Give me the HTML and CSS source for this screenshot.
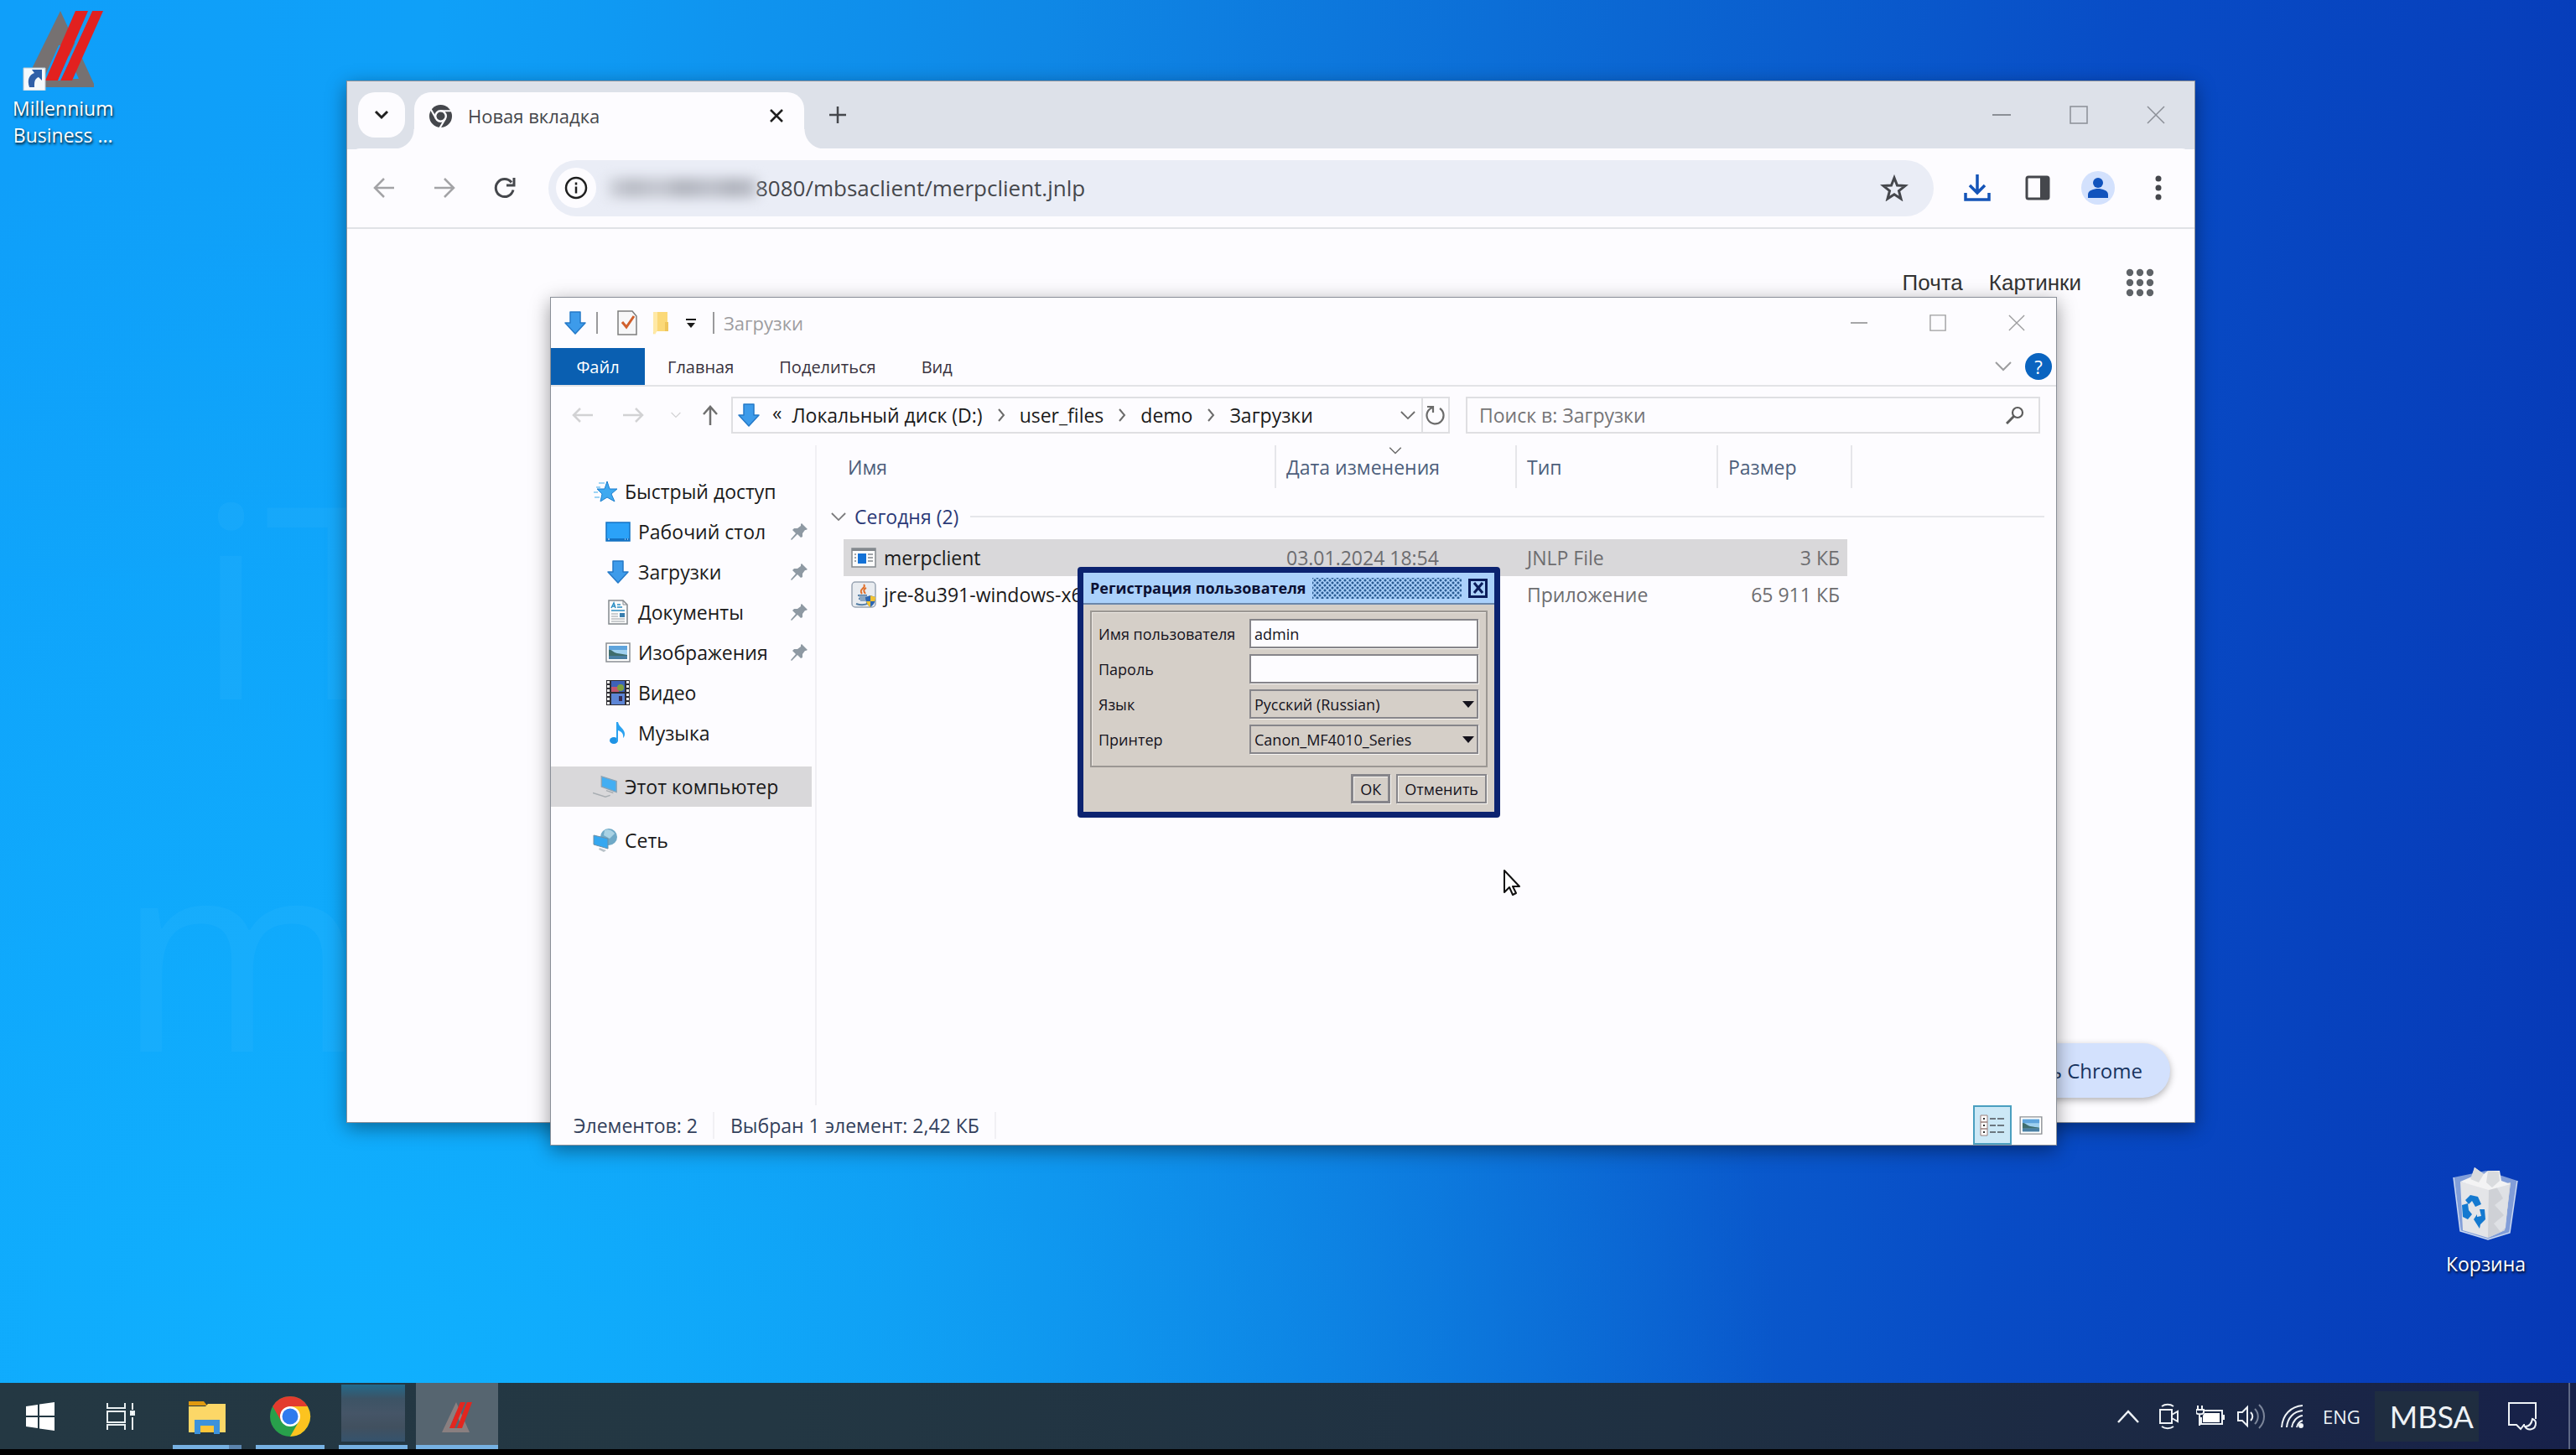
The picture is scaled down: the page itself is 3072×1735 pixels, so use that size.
FILE: index.html
```html
<!DOCTYPE html>
<html lang="ru">
<head>
  <meta charset="UTF-8" />
  <meta name="viewport" content="width=device-width, initial-scale=1.0"/>
  <title>Регистрация пользователя</title>
  <link rel="stylesheet" href="styles.css">
</head>
<body>

  <!-- Shared icons -->
  <svg class="sprite" aria-hidden="true">
    <symbol id="i-down" viewBox="0 0 26 28">
      <path d="M7 1h12v13h6L13 27 1 14h6z" fill="#3d9bea" stroke="#2579c8" stroke-width="1.5" stroke-linejoin="round"/>
    </symbol>
    <symbol id="i-pin" viewBox="0 0 22 22">
      <path d="M14 1l7 7-2 1-1 0-3 4 0 4-2 1-4-4-7 7-1-1 6-7-4-4 2-2 4 0 4-3 0-2z" fill="#8e99a3"/>
    </symbol>
    <symbol id="i-chev" viewBox="0 0 20 12">
      <path d="M1 1l9 9 9-9" fill="none" stroke="currentColor" stroke-width="2"/>
    </symbol>
    <symbol id="i-sep" viewBox="0 0 10 16">
      <path d="M2 1l6 7-6 7" fill="none" stroke="#6b6b6b" stroke-width="2"/>
    </symbol>
    <symbol id="i-min" viewBox="0 0 22 22"><path d="M0 11h22" stroke="currentColor" stroke-width="2"/></symbol>
    <symbol id="i-max" viewBox="0 0 22 22"><path d="M1 1h20v20H1z" fill="none" stroke="currentColor" stroke-width="1.5"/></symbol>
    <symbol id="i-close" viewBox="0 0 22 22"><path d="M1 1l20 20M21 1L1 21" stroke="currentColor" stroke-width="1.5"/></symbol>
    <symbol id="i-photo" viewBox="0 0 30 24">
      <path d="M1 1h28v22H1z" fill="#fff" stroke="#8b8f94" stroke-width="1.5"/>
      <path d="M4 4h22v16H4z" fill="#9fd0ef"/>
      <path d="M4 4h22v5H4z" fill="#5fa4dc"/>
      <path d="M4 9c3-1 5 3 10 4s8 1 12 2v1H4z" fill="#3f6d6d"/>
      <path d="M4 16h22v4H4z" fill="#4a7fa3"/>
    </symbol>
  </svg>

  <main class="desktop">
    <div class="wallpaper-mark mark-it" aria-hidden="true">iT</div>
    <div class="wallpaper-mark mark-m" aria-hidden="true">m</div>

    <!-- Desktop shortcuts -->
    <a class="shortcut shortcut-mbs" href="#">
      <svg width="98" height="98" viewBox="0 0 98 98">
        <path fill-rule="evenodd" d="M46 3L86 90v4H10L9 78zM44 44L26 84h42L50 44z" fill="#767171"/>
        <path d="M64 3h15L43 86H28z" fill="#e2211f"/>
        <path d="M84 3h13L60 86H46z" fill="#e2211f"/>
        <path d="M81 3h3L46 86h-3z" fill="#1b9bf0"/>
        <path d="M2 71h26v27H2z" fill="#f5f9fc" stroke="#b9c7d2"/>
        <path d="M9 94c-3-9 0-15 6-17l-3-4h12v13l-4-4c-5 2-5 6-5 12z" fill="#2f5fa8"/>
      </svg>
      <span>Millennium<br>Business ...</span>
    </a>
    <a class="shortcut shortcut-bin" href="#">
      <svg width="78" height="88" viewBox="0 0 78 88">
        <path d="M1 13L40 5l37 12-9 62-26 8-33-10z" fill="#c3d3ea" opacity=".65"/>
        <path d="M9 18l34 8 26-7-7 57-20 9-30-9z" fill="#e4e5e8"/>
        <path d="M43 26l26-7-7 57-20 9z" fill="#cfd1d6"/>
        <path d="M52 24l8 14-10 8 11 12-12 10 8 10 6-5 5-53z" fill="#dfe1e5"/>
        <path d="M9 18l14-6 3-11 11 8 5-4 14 0 2 12 11 4-26 7z" fill="#f3f3f4"/>
        <path d="M26 1l11 8-6 10-10-4zM42 5l-2 14 7 6 9-8-1-11z" fill="#d9dbde"/>
        <path d="M1 13l8 64 33 10 26-8 9-62" fill="none" stroke="#eaf1fb" stroke-width="1.5" opacity=".8"/>
        <path d="M15 40l6-6 9 2 4 9-7 3-4-7-4 4zM11 46l7-2 1 8 4 5-5 6-6-3zM25 63l4-6 0 3 5-1-2-8 6 0 1 12-6 6-1 5z" fill="#1479d0"/>
      </svg>
      <span>Корзина</span>
    </a>

    <!-- Browser window -->
    <section class="window browser" aria-label="Chrome">
      <header class="tabstrip">
        <button class="tab-search" aria-label="Поиск вкладок">
          <svg width="18" height="12" viewBox="0 0 18 12"><path d="M2 2l7 7 7-7" fill="none" stroke="#1f1f1f" stroke-width="3"/></svg>
        </button>
        <div class="tab">
          <svg width="29" height="29" viewBox="0 0 30 30">
            <circle cx="15" cy="15" r="14" fill="#45474c"/>
            <circle cx="15" cy="15" r="6.5" fill="none" stroke="#fdfcff" stroke-width="2.5"/>
            <path d="M15 8.500h14M9.400 18.200L2.500 6M20.600 18.200L14 29.500" stroke="#fdfcff" stroke-width="2.200"/>
          </svg>
          <span class="tab-title">Новая вкладка</span>
          <button class="tab-close" aria-label="Закрыть вкладку">
            <svg width="16" height="16" viewBox="0 0 16 16"><path d="M1 1l14 14M15 1L1 15" stroke="#1f1f1f" stroke-width="2.500"/></svg>
          </button>
        </div>
        <button class="tab-new" aria-label="Новая вкладка">
          <svg width="22" height="22" viewBox="0 0 22 22"><path d="M11 1v20M1 11h20" stroke="#45474c" stroke-width="2.500"/></svg>
        </button>
        <div class="win-controls">
          <button aria-label="Свернуть"><svg width="22" height="22"><use href="#i-min"/></svg></button>
          <button aria-label="Развернуть"><svg width="22" height="22"><use href="#i-max"/></svg></button>
          <button aria-label="Закрыть"><svg width="22" height="22"><use href="#i-close"/></svg></button>
        </div>
      </header>

      <div class="toolbar">
        <button aria-label="Назад"><svg width="26" height="26" viewBox="0 0 26 26"><path d="M25 13H2M13 2L2 13l11 11" fill="none" stroke="#a3a3a6" stroke-width="2.500"/></svg></button>
        <button aria-label="Вперед"><svg width="26" height="26" viewBox="0 0 26 26"><path d="M1 13h23M13 2l11 11-11 11" fill="none" stroke="#a3a3a6" stroke-width="2.500"/></svg></button>
        <button aria-label="Обновить"><svg width="28" height="28" viewBox="0 0 28 28"><path d="M24 16.500A10.500 10.500 0 1 1 22 7.500M25 2v9h-9" fill="none" stroke="#45474c" stroke-width="3"/></svg></button>
        <div class="omnibox">
          <button class="site-info" aria-label="Сведения о сайте">
            <svg width="28" height="28" viewBox="0 0 28 28"><circle cx="14" cy="14" r="12" fill="none" stroke="#1f1f1f" stroke-width="2.500"/><path d="M14 12.500v8M14 7.500v3" stroke="#1f1f1f" stroke-width="2.500"/></svg>
          </button>
          <span class="url-hidden"></span>
          <input class="url" type="text" aria-label="Адрес" value="8080/mbsaclient/merpclient.jnlp">
          <button class="star" aria-label="Добавить в закладки">
            <svg width="34" height="32" viewBox="0 0 34 32"><path d="M17 4l3.500 9 9.500.600-7.500 6 2.500 9.400-8-5.300L9 29l2.500-9.400L4 13.600l9.500-.600z" fill="none" stroke="#45474c" stroke-width="3"/></svg>
          </button>
        </div>
        <button aria-label="Загрузки"><svg width="32" height="34" viewBox="0 0 32 34"><path d="M16 1v21M7 14l9 9 9-9M2 23v8h28v-8" fill="none" stroke="#1454b8" stroke-width="3.500"/></svg></button>
        <button aria-label="Боковая панель"><svg width="30" height="30" viewBox="0 0 30 30"><rect x="2" y="2" width="26" height="26" rx="2" fill="none" stroke="#45474c" stroke-width="3"/><path d="M18 2h10v26H18z" fill="#45474c"/></svg></button>
        <button aria-label="Профиль"><svg width="40" height="40" viewBox="0 0 40 40"><circle cx="20" cy="20" r="20" fill="#d3e1fd"/><circle cx="20" cy="14" r="6" fill="#1153bd"/><path d="M8 32v-4c0-5 7-7 12-7s12 2 12 7v4z" fill="#1153bd"/></svg></button>
        <button aria-label="Меню"><svg width="8" height="30" viewBox="0 0 8 30"><circle cx="4" cy="4" r="3.500" fill="#45474c"/><circle cx="4" cy="15" r="3.500" fill="#45474c"/><circle cx="4" cy="26" r="3.500" fill="#45474c"/></svg></button>
      </div>

      <div class="page">
        <nav class="page-links">
          <a href="#">Почта</a>
          <a href="#">Картинки</a>
          <button aria-label="Приложения">
            <svg width="34" height="34" viewBox="0 0 34 34" fill="#5f6368">
              <circle cx="5" cy="5" r="4.200"/><circle cx="17" cy="5" r="4.200"/><circle cx="29" cy="5" r="4.200"/>
              <circle cx="5" cy="17" r="4.200"/><circle cx="17" cy="17" r="4.200"/><circle cx="29" cy="17" r="4.200"/>
              <circle cx="5" cy="29" r="4.200"/><circle cx="17" cy="29" r="4.200"/><circle cx="29" cy="29" r="4.200"/>
            </svg>
          </button>
        </nav>
        <button class="customize">Настроить Chrome</button>
      </div>
    </section>

    <!-- File explorer window -->
    <section class="window explorer" aria-label="Загрузки">
      <header class="titlebar">
        <svg width="26" height="28"><use href="#i-down"/></svg>
        <i class="bar"></i>
        <svg class="qa-doc" width="24" height="30" viewBox="0 0 24 30"><path d="M1 1h17l5 6v22H1z" fill="#f7f7f8" stroke="#7d7d7d" stroke-width="1.500"/><path d="M6 14l5 6 9-13" fill="none" stroke="#d1602c" stroke-width="3"/></svg>
        <svg class="qa-folder" width="20" height="30" viewBox="0 0 20 30"><path d="M1 2h17v23H3l-2 4z" fill="#fbd978"/><path d="M1 2h5v22l-3 5-2-3z" fill="#ffe9a6"/><path d="M15 14h4v11h-4z" fill="#efc65c"/></svg>
        <svg class="qa-more" width="12" height="12" viewBox="0 0 12 12"><path d="M0 1h12v2H0zM1 6h10l-5 6z" fill="#1a1a1a"/></svg>
        <i class="bar"></i>
        <span class="title">Загрузки</span>
        <div class="win-controls">
          <button aria-label="Свернуть"><svg width="20" height="20"><use href="#i-min"/></svg></button>
          <button aria-label="Развернуть"><svg width="20" height="20"><use href="#i-max"/></svg></button>
          <button aria-label="Закрыть"><svg width="20" height="20"><use href="#i-close"/></svg></button>
        </div>
      </header>

      <div class="ribbon">
        <button class="file-tab">Файл</button>
        <button>Главная</button>
        <button>Поделиться</button>
        <button>Вид</button>
        <svg class="ribbon-chev" width="20" height="12"><use href="#i-chev"/></svg>
        <button class="help" aria-label="Справка">?</button>
      </div>

      <div class="address-row">
        <div class="nav-arrows">
          <svg width="26" height="18" viewBox="0 0 26 18"><path d="M25 9H2M10 1L2 9l8 8" fill="none" stroke="#d2d2d4" stroke-width="2.500"/></svg>
          <svg width="26" height="18" viewBox="0 0 26 18"><path d="M1 9h23M16 1l8 8-8 8" fill="none" stroke="#d2d2d4" stroke-width="2.500"/></svg>
          <svg class="faint" width="12" height="8"><use href="#i-chev"/></svg>
          <svg width="18" height="24" viewBox="0 0 18 24"><path d="M9 24V2M1 11l8-9 8 9" fill="none" stroke="#6f6f6f" stroke-width="2.500"/></svg>
        </div>
        <div class="crumbs">
          <svg width="26" height="28"><use href="#i-down"/></svg>
          <span class="more">«</span>
          <a href="#">Локальный диск (D:)</a>
          <svg width="10" height="16"><use href="#i-sep"/></svg>
          <a href="#">user_files</a>
          <svg width="10" height="16"><use href="#i-sep"/></svg>
          <a href="#">demo</a>
          <svg width="10" height="16"><use href="#i-sep"/></svg>
          <a href="#">Загрузки</a>
          <svg class="crumb-chev" width="18" height="11"><use href="#i-chev"/></svg>
          <button class="refresh" aria-label="Обновить">
            <svg width="24" height="24" viewBox="0 0 24 24"><path d="M17 4a10 10 0 1 1-9-1M2 2h7v7" fill="none" stroke="#6b6b6b" stroke-width="2.200"/></svg>
          </button>
        </div>
        <div class="search">
          <input type="text" aria-label="Поиск" placeholder="Поиск в: Загрузки">
          <svg width="22" height="22" viewBox="0 0 22 22"><circle cx="14" cy="8" r="6" fill="none" stroke="#5c5c5c" stroke-width="2.200"/><path d="M10 12l-9 9" stroke="#5c5c5c" stroke-width="3"/></svg>
        </div>
      </div>

      <div class="explorer-body">
        <nav class="tree">
          <a href="#" class="root">
            <svg width="28" height="26" viewBox="0 0 28 26"><path d="M16 1l3 9 9 0-7 6 4 9-9-5-8 5 2-9-6-6 9 0z" fill="#3fa9f0" stroke="#1e7fce"/><path d="M6 3h7M3 8h5M0 14h5M1 20h6" stroke="#7fc6f2" stroke-width="1.500"/></svg>
            Быстрый доступ
          </a>
          <a href="#">
            <svg width="30" height="24" viewBox="0 0 30 24"><path d="M1 1h28v22H1z" fill="#2ba2f8" stroke="#1573c4" stroke-width="1.500"/><path d="M1 20h28v3H1z" fill="#1573c4"/><path d="M3 21h2M23 21h1M26 21h1" stroke="#fff"/></svg>
            Рабочий стол <svg class="pin" width="22" height="22"><use href="#i-pin"/></svg>
          </a>
          <a href="#">
            <svg width="30" height="28"><use href="#i-down"/></svg>
            Загрузки <svg class="pin" width="22" height="22"><use href="#i-pin"/></svg>
          </a>
          <a href="#">
            <svg width="30" height="30" viewBox="0 0 30 30"><path d="M4 1h17l5 5v23H4z" fill="#fbfbfb" stroke="#84898e" stroke-width="1.500"/><path d="M21 1v5h5" fill="none" stroke="#84898e"/><path d="M7 10l3-6 2 6M8 8h4M14 6h4M14 9h6M7 13h16" stroke="#2d8fc4" fill="none" stroke-width="1.500"/><path d="M17 16h6v5h-6z" fill="#3b7fae"/><path d="M7 17h8M7 20h8M7 23h16M7 26h16" stroke="#9aa0a5"/></svg>
            Документы <svg class="pin" width="22" height="22"><use href="#i-pin"/></svg>
          </a>
          <a href="#">
            <svg width="30" height="24"><use href="#i-photo"/></svg>
            Изображения <svg class="pin" width="22" height="22"><use href="#i-pin"/></svg>
          </a>
          <a href="#">
            <svg width="30" height="32" viewBox="0 0 30 32"><path d="M1 1h28v30H1z" fill="#2e2d33"/><path d="M7 2h16v13H7z" fill="#3d62b8"/><path d="M7 17h16v13H7z" fill="#5d86d6"/><path d="M7 9h9v6H7z" fill="#c2566f"/><circle cx="18" cy="10" r="4" fill="#7da03c"/><path d="M16 20h4v6h-4z" fill="#3a2d52"/><path d="M3.500 2v28M26.500 2v28" stroke="#f2f2f2" stroke-width="3" stroke-dasharray="3 2"/></svg>
            Видео
          </a>
          <a href="#">
            <svg width="30" height="30" viewBox="0 0 30 30"><ellipse cx="10" cy="24" rx="5" ry="4" fill="#1f93e4"/><path d="M13 25V2h2c1 6 8 8 8 14 0 3-1 4-2 5 1-5-2-8-6-9v13z" fill="#2ba2f0"/></svg>
            Музыка
          </a>
          <a href="#" class="root group selected">
            <svg width="32" height="28" viewBox="0 0 32 28"><path d="M11 1l19 6v14L11 14z" fill="#43aef2" stroke="#8aa3b5" stroke-width="1.500"/><path d="M17 19l9 3M0 22l16 5 6-2" fill="none" stroke="#a8adb2" stroke-width="1.500"/></svg>
            Этот компьютер
          </a>
          <a href="#" class="root group">
            <svg width="30" height="30" viewBox="0 0 30 30"><circle cx="19" cy="11" r="10" fill="#6fa9c7"/><path d="M14 3c5-2 10 1 12 4l-6 6-7-4z" fill="#a9d2e4"/><path d="M1 9l17 4v12L1 20z" fill="#35a7f0" stroke="#6f8fa5"/><path d="M8 24l8 3-3 2-6-3z" fill="#b9c2c9"/></svg>
            Сеть
          </a>
        </nav>

        <div class="files">
          <svg class="sort-chev" width="16" height="9"><use href="#i-chev"/></svg>
          <table>
            <colgroup><col class="c-name"><col class="c-date"><col class="c-type"><col class="c-size"><col></colgroup>
            <thead>
              <tr><th>Имя</th><th>Дата изменения</th><th>Тип</th><th>Размер</th><td></td></tr>
            </thead>
            <tbody>
              <tr class="group-row">
                <td colspan="5"><div><svg width="18" height="11"><use href="#i-chev"/></svg>Сегодня (2)<i></i></div></td>
              </tr>
              <tr class="picked">
                <td><span class="file">
                  <svg width="30" height="24" viewBox="0 0 30 24"><path d="M1 1h28v22H1z" fill="#fbfbfb" stroke="#84898e" stroke-width="1.500"/><path d="M1 1h28v3H1z" fill="#84898e"/><path d="M8 7h10v12H8z" fill="#1371d6"/><path d="M20 8h6M20 12h6M20 16h6M4 8h2M4 12h2M4 16h2" stroke="#84898e" stroke-width="1.500"/></svg>
                  merpclient</span></td>
                <td>03.01.2024 18:54</td><td>JNLP File</td><td class="size">3 КБ</td><td></td>
              </tr>
              <tr>
                <td><span class="file">
                  <svg width="30" height="32" viewBox="0 0 30 32"><rect x="1" y="1" width="28" height="30" rx="4" fill="#e9ecf0" stroke="#9aa5b3" stroke-width="1.500"/><path d="M15 4c4 4-7 5-2 11M18 8c-4 2-3 4-1 7" fill="none" stroke="#e0702b" stroke-width="2"/><path d="M8 17h11M9 21h9M6 27c6 2 12 1 15-1" fill="none" stroke="#527da5" stroke-width="2"/><path d="M9 17h10l-2 7h-6z" fill="#8aa6c2"/><path d="M17 19l6-2 6 2c0 6-2 9-6 12-4-3-6-6-6-12z" fill="#2d66b2"/><path d="M23 17l6 2c0 2 0 3-1 5h-5zM18 24h5v7c-3-2-4-4-5-7z" fill="#f1c232"/></svg>
                  jre-8u391-windows-x64</span></td>
                <td></td><td>Приложение</td><td class="size">65 911 КБ</td><td></td>
              </tr>
            </tbody>
          </table>
        </div>
      </div>

      <footer class="status">
        <span>Элементов: 2</span>
        <span>Выбран 1 элемент: 2,42 КБ</span>
        <button class="view active" aria-label="Таблица">
          <svg width="30" height="26" viewBox="0 0 30 26"><path d="M1 1h8v8H1zM1 9h8v8H1zM1 17h8v8H1z" fill="#fff" stroke="#9a7f7a"/><path d="M4 4h2v2H4zM4 12h2v2H4zM4 20h2v2H4z" fill="#333"/><path d="M12 5h7M21 5h8M12 13h7M21 13h8M12 21h7M21 21h8" stroke="#6d7880" stroke-width="2"/></svg>
        </button>
        <button class="view" aria-label="Крупные значки"><svg width="28" height="22"><use href="#i-photo"/></svg></button>
      </footer>
    </section>

    <!-- Login dialog -->
    <form class="dialog">
      <header class="dialog-title">
        <h1>Регистрация пользователя</h1>
        <i class="grip"></i>
        <button type="button" aria-label="Закрыть"><svg width="12" height="14" viewBox="0 0 12 14"><path d="M1 1l10 12M11 1L1 13" stroke="#0b1d5c" stroke-width="3"/></svg></button>
      </header>
      <div class="fields">
        <label for="user">Имя пользователя</label>
        <input id="user" type="text" value="admin">
        <label for="pass">Пароль</label>
        <input id="pass" type="password">
        <label for="lang">Язык</label>
        <span class="combo"><select id="lang"><option>Русский (Russian)</option></select></span>
        <label for="printer">Принтер</label>
        <span class="combo"><select id="printer"><option>Canon_MF4010_Series</option></select></span>
      </div>
      <div class="actions">
        <button type="button" class="default">ОК</button>
        <button type="button">Отменить</button>
      </div>
    </form>

    <svg class="cursor" width="22" height="33" viewBox="0 0 22 33"><path d="M2 2v26l6-6 4 9 4-2-4-8h8z" fill="#fff" stroke="#111" stroke-width="2" stroke-linejoin="round"/></svg>
  </main>

  <!-- Taskbar -->
  <footer class="taskbar">
    <button aria-label="Пуск">
      <svg width="34" height="34" viewBox="0 0 34 34"><path d="M0 5l14-2v13H0zM16 2.500L34 0v16H16zM0 18h14v13L0 29zM16 18h18v16l-18-2.500z" fill="#fff"/></svg>
    </button>
    <button aria-label="Представление задач">
      <svg width="34" height="32" viewBox="0 0 34 32" fill="none" stroke="#e8eef0" stroke-width="2"><path d="M1 0v6h21V0M1 10h21v13H1zM1 32v-6h21v6M31 0v8M31 17v15"/><path d="M29 10h4v4h-4z" fill="#fff"/></svg>
    </button>
    <button class="open stacked" aria-label="Проводник">
      <svg width="44" height="44" viewBox="0 0 44 44"><path d="M0 4h18l4 5H0z" fill="#e0990f"/><path d="M0 10h20l3-3h21v34H0z" fill="#fcd767"/><path d="M7 26h30v17h-7V33H14v10H7z" fill="#3d92dc"/><path d="M14 33h16v8H14z" fill="#fcc53a"/></svg>
    </button>
    <button class="open" aria-label="Chrome">
      <svg width="50" height="50" viewBox="0 0 50 50"><circle cx="25" cy="25" r="24" fill="#28a04b"/><path d="M4.200 13A24 24 0 0 1 45.800 13H25L14.600 31z" fill="#e33b2e"/><path d="M45.800 13A24 24 0 0 1 25 49l10.400-18L25 13z" fill="#fcc31f"/><circle cx="25" cy="25" r="12" fill="#fff"/><circle cx="25" cy="25" r="9.500" fill="#2f7bee"/></svg>
    </button>
    <button class="open" aria-label="Приложение"><i class="smudge"></i></button>
    <button class="open current" aria-label="Millennium Business Suite">
      <svg width="36" height="42" viewBox="0 0 36 42"><path fill-rule="evenodd" d="M17 4l16 36H0zM17 16L9 35h15z" fill="#8a7f80"/><path d="M22 4h6L15 35H9zM30 4h6L24 35h-6z" fill="#e3261f"/></svg>
    </button>

    <div class="tray">
      <svg height="16" viewBox="0 0 26 16"><path d="M1 15L13 2l12 13" fill="none" stroke="#eef2f6" stroke-width="2.500"/></svg>
      <svg height="32" viewBox="0 0 24 32" fill="none" stroke="#eef2f6" stroke-width="2"><path d="M1 8h14v16H1zM15 14l7-4v12l-7-4M3 4c4-3 10-3 14 0M3 28c4 3 10 3 14 0"/></svg>
      <svg height="26" viewBox="0 0 34 26"><path d="M8 6h23v16H6v-8" fill="none" stroke="#eef2f6" stroke-width="2"/><path d="M10 9h18v11H8v-8zM32 11h2v6h-2z" fill="#fff"/><path d="M2 0v5M7 0v5M0 5h9v3c0 3-9 3-9 0zM4 10v14" stroke="#eef2f6" stroke-width="2" fill="none"/></svg>
      <svg height="32" viewBox="0 0 34 32" fill="none" stroke="#eef2f6" stroke-width="2"><path d="M1 11h5l6-6v22l-6-6H1zM16 11c3 3 3 7 0 10"/><path d="M21 7c5 5 5 13 0 18M26 2c8 8 8 20 0 28" stroke="#7c869a"/></svg>
      <svg height="28" viewBox="0 0 28 28" fill="none" stroke="#eef2f6" stroke-width="2"><path d="M1 27C2 12 12 2 26 1M7 27C8 16 15 8 26 7M13 27c1-7 6-13 13-14M19 27c1-4 3-7 7-8"/><circle cx="24" cy="25" r="2" fill="#fff"/></svg>
      <span class="lang">ENG</span>
      <span class="clock">MBSA</span>
      <svg height="34" viewBox="0 0 34 34" fill="none" stroke="#eef2f6" stroke-width="2"><path d="M20 27h-1l-4 5-5-5H1V1h32v19"/><path d="M29 20c-1 6-4 9-9 9 3 5 13 5 13-4 0-2-1-4-4-5z"/></svg>
    </div>
  </footer>

</body>
</html>
```

FILE: styles.css
```css
* { margin: 0; padding: 0; box-sizing: border-box; }
html, body {
  height: 100%;
  overflow: hidden;
}
body {
  display: flex;
  flex-direction: column;
  font-family: 'Open Sans', 'Noto Sans', sans-serif;
  font-size: 23px;
  color: #1a1a1a;
  background: #000;
}
button, input, select {
  font: inherit;
  color: inherit;
  background: none;
  border: 0;
  border-radius: 0;
  outline: 0;
}
a { color: inherit; text-decoration: none; }
svg { display: block; flex: none; }
.sprite { position: absolute; width: 0; height: 0; }

/* Desktop */
.desktop {
  flex: 1;
  position: relative;
  overflow: hidden;
  background:
    radial-gradient(ellipse 55% 90% at 14% 100%, #10b0fe 0%, rgba(16,176,254,0) 100%),
    linear-gradient(97deg, #0f9ffa 0%, #0fa0f8 16%, #0f88e6 38%, #0b66d2 60%, #084cc6 78%, #0638b6 100%);
}
.wallpaper-mark {
  position: absolute;
  line-height: 1;
  color: rgba(70,190,255,0.14);
}
.mark-it { left: 235px; top: 550px; font-size: 320px; }
.mark-m { left: 140px; top: 970px; font-size: 320px; }

.shortcut {
  position: absolute;
  display: flex;
  flex-direction: column;
  align-items: center;
  line-height: 32px;
  text-align: center;
  color: #fff;
  text-shadow: 1px 2px 3px rgba(0,0,0,0.9);
}
.shortcut-mbs { left: 15px; top: 10px; gap: 5px; }
.shortcut-bin { right: 60px; bottom: 126px; gap: 12px; }

/* Windows */
.window {
  position: absolute;
  display: flex;
  flex-direction: column;
  background: #fdfcff;
  border: 1px solid #8a8f98;
  box-shadow: 0 6px 22px rgba(0,0,0,0.4);
}
.win-controls {
  display: flex;
  align-items: center;
  margin-left: auto;
  color: #8b8f96;
}
.win-controls button {
  display: flex;
  justify-content: center;
  width: 92px;
}

/* Browser */
.browser { left: 413px; right: 454px; top: 96px; bottom: 310px; }
.tabstrip {
  display: flex;
  height: 81px;
  padding: 13px 0 0 13px;
  background: #dde1e9;
}
.tab-search {
  display: flex;
  align-items: center;
  justify-content: center;
  width: 56px;
  height: 54px;
  border-radius: 20px;
  background: #fdfcff;
}
.tab {
  position: relative;
  display: flex;
  align-items: center;
  width: 465px;
  height: 68px;
  margin-left: 11px;
  padding: 0 25px 12px 17px;
  border-radius: 20px 20px 0 0;
  background: #fdfcff;
}
.tab::before, .tab::after {
  content: '';
  position: absolute;
  bottom: 0;
  width: 24px;
  height: 24px;
}
.tab::before { left: -24px; background: radial-gradient(circle at 0 0, transparent 23px, #fdfcff 24px); }
.tab::after { right: -24px; background: radial-gradient(circle at 100% 0, transparent 23px, #fdfcff 24px); }
.tab-title { margin-left: 18px; font-size: 22px; color: #45474c; }
.tab-close { margin-left: auto; }
.tab-new { display: flex; height: 54px; margin-left: 29px; align-items: center; }
.tabstrip .win-controls { height: 54px; }

.toolbar {
  display: flex;
  align-items: center;
  gap: 32px;
  height: 96px;
  padding: 0 23px 0 24px;
  margin-top: -1px;
  border-bottom: 2px solid #e0e2e6;
  border-radius: 16px 16px 0 0;
  background: #fdfcff;
}
.toolbar > button {
  display: flex;
  justify-content: center;
  width: 40px;
}
.omnibox {
  flex: 1;
  display: flex;
  align-items: center;
  height: 67px;
  padding: 0 30px 0 9px;
  border-radius: 34px;
  background: #eaedf6;
}
.site-info {
  display: flex;
  align-items: center;
  justify-content: center;
  width: 48px;
  height: 48px;
  border-radius: 50%;
  background: #fdfcff;
}
.url-hidden {
  width: 178px;
  height: 24px;
  margin: 0 -2px 0 14px;
  z-index: 1;
  background: linear-gradient(90deg, #d3d6df, #b9bcc5 15%, #c6c9d2 35%, #b2b5be 50%, #bfc2cc 70%, #b0b3bc 85%, #c3c6d0);
  filter: blur(7px);
}
.url {
  flex: 1;
  min-width: 0;
  font-size: 26px;
  color: #45474c;
}

.page {
  position: relative;
  flex: 1;
}
.page-links {
  display: flex;
  justify-content: flex-end;
  align-items: center;
  gap: 31px;
  padding: 47px 48px 0;
  font: 26px 'Liberation Sans', sans-serif;
  color: #333;
}
.page-links button { margin-left: 22px; }
.customize {
  position: absolute;
  right: 29px;
  bottom: 29px;
  height: 65px;
  padding: 0 33px 0 60px;
  border-radius: 33px;
  background: #d3e1fd;
  color: #17335e;
  font-size: 24px;
  box-shadow: 0 3px 8px rgba(0,0,0,0.3);
}

/* Explorer */
.explorer { left: 656px; right: 619px; top: 354px; bottom: 283px; }
.titlebar {
  display: flex;
  align-items: center;
  height: 60px;
  padding-left: 16px;
}
.titlebar .bar { width: 2px; height: 26px; background: #9a9a9c; }
.titlebar .bar:nth-of-type(1) { margin: 0 23px 0 12px; }
.qa-folder { margin-left: 18px; }
.qa-more { margin: 0 20px; }
.title { margin-left: 11px; font-size: 22px; color: #9d9d9f; }
.titlebar .win-controls { color: #9d9d9f; }
.titlebar .win-controls button { width: 94px; }

.ribbon {
  display: flex;
  align-items: center;
  height: 46px;
  border-bottom: 2px solid #e3e3e6;
  font-size: 20px;
  color: #3a3340;
}
.ribbon button { padding: 0 27px; height: 44px; }
.ribbon .file-tab {
  width: 112px;
  background: #0a5fb1;
  color: #fff;
}
.ribbon-chev { margin-left: auto; color: #9d9d9f; }
.ribbon .help {
  width: 32px;
  height: 32px;
  padding: 0;
  margin: 0 5px 0 16px;
  border-radius: 50%;
  background: #0a64c0;
  color: #fff;
  font-size: 22px;
  line-height: 30px;
}

.address-row {
  display: flex;
  gap: 19px;
  padding: 12px 19px 14px 0;
}
.nav-arrows {
  display: flex;
  align-items: center;
  gap: 34px;
  width: 196px;
  padding-left: 25px;
}
.nav-arrows .faint { margin: 0 -8px 0 -2px; color: #d2d2d4; }
.crumbs {
  flex: 1;
  display: flex;
  align-items: center;
  gap: 17px;
  height: 44px;
  padding-left: 6px;
  border: 2px solid #dfdfe2;
}
.crumbs .more { margin: -6px -5px 0 -2px; }
.crumb-chev { margin-left: auto; margin-right: -10px; color: #6b6b6b; }
.refresh {
  display: flex;
  align-items: center;
  justify-content: center;
  width: 32px;
  height: 40px;
  border-left: 2px solid #dfdfe2;
}
.search {
  display: flex;
  align-items: center;
  width: 685px;
  padding: 0 17px 0 14px;
  border: 2px solid #dfdfe2;
}
.search input { flex: 1; min-width: 0; }
.search input::placeholder { color: #757577; opacity: 1; }

.explorer-body {
  flex: 1;
  display: flex;
  min-height: 0;
}
.tree {
  width: 317px;
  padding: 31px 4px 0 0;
  border-right: 2px solid #f1f0f4;
}
.tree a {
  display: flex;
  align-items: center;
  gap: 9px;
  height: 48px;
  padding-left: 65px;
  white-space: nowrap;
}
.tree a.root { padding-left: 50px; gap: 8px; }
.tree .root svg { width: 30px; }
.tree .group { margin-top: 16px; }
.tree .selected { background: #d9d8da; }
.tree .pin { margin: 0 4px 0 auto; }

.files { position: relative; flex: 1; padding: 0 14px 0 32px; }
.sort-chev { position: absolute; left: 682px; top: 2px; color: #6b6b6b; }
table {
  width: 100%;
  table-layout: fixed;
  border-collapse: separate;
  border-spacing: 0;
}
.c-name { width: 516px; }
.c-date { width: 287px; }
.c-type { width: 240px; }
.c-size { width: 160px; }
thead th {
  height: 51px;
  padding-left: 12px;
  border-right: 2px solid #e6e6ea;
  text-align: left;
  font-weight: 400;
  color: #4d5f7c;
}
thead th:first-child { padding-left: 5px; }
.group-row div {
  display: flex;
  align-items: center;
  gap: 10px;
  height: 61px;
  margin-left: -15px;
  padding-top: 7px;
  color: #2c3a78;
}
.group-row svg { color: #7a7a7c; }
.group-row i { flex: 1; height: 2px; margin-left: 4px; background: #e6e6ea; }
tbody td { height: 44px; padding-left: 12px; color: #6d6d70; }
tbody td:first-child { padding-left: 9px; }
tbody .group-row td:first-child { padding: 0; }
tbody .size {
  padding-right: 9px;
  border-right: 6px solid transparent;
  background-clip: padding-box;
  text-align: right;
}
.picked td:not(:last-child) { background-color: #d9d8da; }
.file { display: flex; align-items: center; gap: 9px; color: #1a1a1a; }

.status {
  display: flex;
  align-items: center;
  height: 47px;
  padding: 0 16px 0 27px;
  color: #33415c;
}
.status span {
  margin-right: 19px;
  padding-right: 18px;
  border-right: 2px solid #f1f0f4;
}
.view {
  display: flex;
  align-items: center;
  justify-content: center;
  height: 47px;
}
.view.active {
  width: 46px;
  margin: 0 9px 0 auto;
  border: 2px solid #4a9fc0;
  background: #cce8f6;
}

/* Dialog */
.dialog {
  position: absolute;
  left: 50%;
  top: 676px;
  width: 504px;
  margin-left: -251px;
  border: 7px solid #0c2370;
  border-radius: 4px;
  background: #d5cfc8;
  font-size: 18px;
  color: #14121c;
}
.dialog-title {
  display: flex;
  align-items: center;
  gap: 8px;
  height: 38px;
  padding: 0 8px 0 8px;
  border-bottom: 2px solid #6a87ab;
  background: #abd1fb;
}
.dialog-title h1 { font-size: 18px; color: #0b1034; }
.grip {
  flex: 1;
  height: 25px;
  background:
    radial-gradient(circle, #2b5d94 1px, transparent 2px) 0 0 / 6px 6px,
    radial-gradient(circle, #2b5d94 1px, transparent 2px) 3px 3px / 6px 6px;
}
.dialog-title button {
  display: flex;
  align-items: center;
  justify-content: center;
  width: 23px;
  height: 23px;
  border: 3px solid #0b1d5c;
}
.fields {
  display: grid;
  grid-template-columns: 180px 1fr;
  align-items: center;
  row-gap: 7px;
  margin: 7px 8px 8px;
  padding: 8px 9px 14px 8px;
  border: 2px solid #9b9793;
  box-shadow: inset 1px 1px #ece8e3;
}
.fields input, .fields select {
  display: block;
  width: 100%;
  height: 35px;
  padding: 0 4px;
  border: 2px solid #86858a;
  box-shadow: 1px 1px #f7f5f2;
  appearance: none;
}
.fields input { background: #fdfcff; }
.combo { position: relative; }
.combo::after {
  content: '';
  position: absolute;
  right: 5px;
  top: 14px;
  width: 14px;
  height: 8px;
  background: #14121c;
  clip-path: polygon(0 0, 100% 0, 50% 100%);
}
.actions {
  display: flex;
  justify-content: flex-end;
  gap: 7px;
  padding: 0 9px 10px;
}
.actions button {
  height: 35px;
  padding: 0 8px;
  border: 2px solid #86858a;
  box-shadow: 1px 1px #f7f5f2, inset 1px 1px #f7f5f2;
}
.actions .default { border-width: 3px; }

.cursor { position: absolute; left: 1792px; top: 1036px; }

/* Taskbar */
.taskbar {
  display: flex;
  height: 79px;
  margin-bottom: 7px;
  background: linear-gradient(90deg, #243843 0%, #233743 30%, #1f3042 65%, #1b2844 85%, #17214a 100%);
}
.taskbar button {
  display: flex;
  align-items: center;
  justify-content: center;
  width: 96px;
}
.taskbar .open {
  width: 82px;
  margin: 0 2px 0 15px;
  border-bottom: 5px solid #76b1e2;
  border-top: 5px solid transparent;
}
.taskbar .stacked {
  margin-left: 14px;
  padding-top: 5px;
  border-top: 0;
  border-image: linear-gradient(90deg, #76b1e2 78%, #5b84ad 78%) 5;
}
.taskbar .current {
  width: 98px;
  margin-left: 8px;
  background: #566570;
  border-top-color: #566570;
}
.smudge {
  width: 76px;
  height: 68px;
  margin-top: -7px;
  background: linear-gradient(#23698a, #3c5365 25%, #455567 50%, #41505f 75%, #35536d);
}
.tray {
  display: flex;
  align-items: center;
  gap: 15px;
  margin-left: auto;
  margin-right: 7px;
  padding-right: 38px;
  border-right: 2px solid #5d6784;
  color: #eef2f6;
}
.tray svg { width: 34px; }
.lang { margin: 0 2px 0 4px; font-size: 22px; }
.clock {
  margin-right: 20px;
  padding: 0 6px 0 18px;
  background: #1f2d40;
  font: 36px/60px Lato, sans-serif;
}
```
